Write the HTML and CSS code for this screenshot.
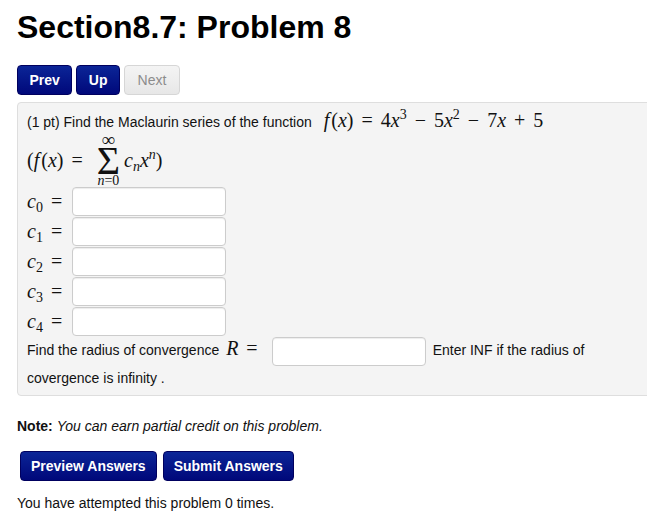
FILE: index.html
```html
<!DOCTYPE html>
<html>
<head>
<meta charset="utf-8">
<link rel="stylesheet" href="styles.css">
</head>
<body>
<div class="page">
  <h1 class="title">Section8.7: Problem 8</h1>
  <div class="nav">
    <a class="btn btn-primary">Prev</a>
    <a class="btn btn-primary">Up</a>
    <span class="btn btn-disabled">Next</span>
  </div>
  <div class="problem">
    <p class="line1">(1 pt) Find the Maclaurin series of the function <span class="math m1"><i class="fi">f</i>(<i>x</i>)<span class="rel">=</span>4<i>x</i><sup>3</sup><span class="bin">−</span>5<i>x</i><sup>2</sup><span class="bin">−</span>7<i>x</i><span class="bin">+</span>5</span></p>
    <div class="series math">
      <span>(</span><i class="fi">f</i><span>(</span><i>x</i><span>)</span><span class="rel">=</span>
      <span class="sum"><span class="lim inf">∞</span><span class="sigma">Σ</span><span class="lim"><i>n</i>=0</span></span>
      <span class="term"><i>c</i><sub><i>n</i></sub><i>x</i><sup><i>n</i></sup></span><span>)</span>
    </div>
    <div class="coef-row"><span class="coef-label math"><i>c</i><sub>0</sub><span class="rel">=</span></span><input class="answer" type="text"></div>
    <div class="coef-row"><span class="coef-label math"><i>c</i><sub>1</sub><span class="rel">=</span></span><input class="answer" type="text"></div>
    <div class="coef-row"><span class="coef-label math"><i>c</i><sub>2</sub><span class="rel">=</span></span><input class="answer" type="text"></div>
    <div class="coef-row"><span class="coef-label math"><i>c</i><sub>3</sub><span class="rel">=</span></span><input class="answer" type="text"></div>
    <div class="coef-row"><span class="coef-label math"><i>c</i><sub>4</sub><span class="rel">=</span></span><input class="answer" type="text"></div>
    <p class="radius">Find the radius of convergence <span class="math mr"><i>R</i><span class="rel">=</span></span><input class="answer inline" type="text">Enter INF if the radius of covergence is infinity .</p>
  </div>
  <p class="note"><b>Note:</b> <i>You can earn partial credit on this problem.</i></p>
  <div class="submit">
    <button class="btn btn-primary btn-lg">Preview Answers</button>
    <button class="btn btn-primary btn-lg">Submit Answers</button>
  </div>
  <p class="attempts">You have attempted this problem 0 times.</p>
</div>
</body>
</html>
```

FILE: styles.css
```css
html {
  overflow-x: hidden;
}
body {
  margin: 0;
  font-family: "Liberation Sans", Arial, sans-serif;
  font-size: 14px;
  line-height: 20px;
  color: #111;
  background: #fff;
}
.page {
  padding: 7px 0 0 17px;
}
.title {
  margin: 0;
  font-size: 32px;
  line-height: 40px;
  font-weight: bold;
  color: #000;
}
.nav {
  display: flex;
  gap: 4px;
  margin-top: 18px;
}
.btn {
  display: inline-block;
  box-sizing: border-box;
  height: 30px;
  padding: 4px 11.5px;
  border-radius: 4px;
  border: 1px solid;
  font-family: "Liberation Sans", Arial, sans-serif;
  font-size: 14px;
  line-height: 20px;
  font-weight: bold;
}
.btn-primary {
  color: #fff;
  background: linear-gradient(#0b2597, #00087a);
  border-color: #00005e;
}
.btn-disabled {
  color: #8c8c8c;
  font-weight: normal;
  padding: 4px 12.5px;
  background: linear-gradient(#f4f4f4, #e7e7e7);
  border-color: #d6d6d6;
}
.problem {
  box-sizing: border-box;
  width: 640px;
  margin-top: 7px;
  padding: 7px 9px 5px;
  background: #f4f4f4;
  border: 1px solid #dedede;
  border-radius: 4px;
}
.line1 {
  margin: 0;
  height: 23px;
  white-space: nowrap;
}
.math {
  font-family: "Liberation Serif", "Times New Roman", serif;
  font-size: 20px;
  line-height: 1;
  color: #111;
}
.math i {
  font-style: italic;
}
.math .fi {
  margin-right: 2px;
}
.m1 {
  margin-left: 8px;
}
.rel {
  margin: 0 8px;
}
.bin {
  margin: 0 8px;
}
.math sup {
  font-size: 14px;
  line-height: 0;
  vertical-align: 8px;
}
.math sub {
  font-size: 14px;
  line-height: 0;
  vertical-align: -4px;
}
.series {
  display: flex;
  align-items: center;
  height: 54px;
}
.sum {
  display: flex;
  flex-direction: column;
  align-items: center;
  gap: 1px;
  margin: 0 4px 0 6px;
}
.lim {
  font-size: 14px;
  line-height: 12px;
}
.lim.inf {
  font-size: 19px;
}
.sigma {
  font-size: 40px;
  line-height: 27px;
  height: 27px;
  font-weight: normal;
}
.coef-row {
  display: flex;
  align-items: center;
  height: 29px;
  margin-bottom: 1px;
}
.coef-label {
  display: inline-block;
  width: 45px;
  line-height: 29px;
}
.answer {
  box-sizing: border-box;
  width: 154px;
  height: 29px;
  margin: 0;
  padding: 0 6px;
  border: 1px solid #cccccc;
  border-radius: 4px;
  background: #fff;
  box-shadow: inset 0 1px 1px rgba(0, 0, 0, 0.075);
}
.radius {
  margin: 0;
  line-height: 24px;
}
.mr {
  margin-left: 3px;
}
.answer.inline {
  vertical-align: middle;
  margin: 0 7px 0 6px;
}
.note {
  margin: 20px 0 0;
}
.submit {
  display: flex;
  gap: 6px;
  margin-top: 15px;
  padding-left: 3px;
}
.btn-lg {
  padding: 4px 10px;
}
.attempts {
  margin: 12px 0 0;
}
```
